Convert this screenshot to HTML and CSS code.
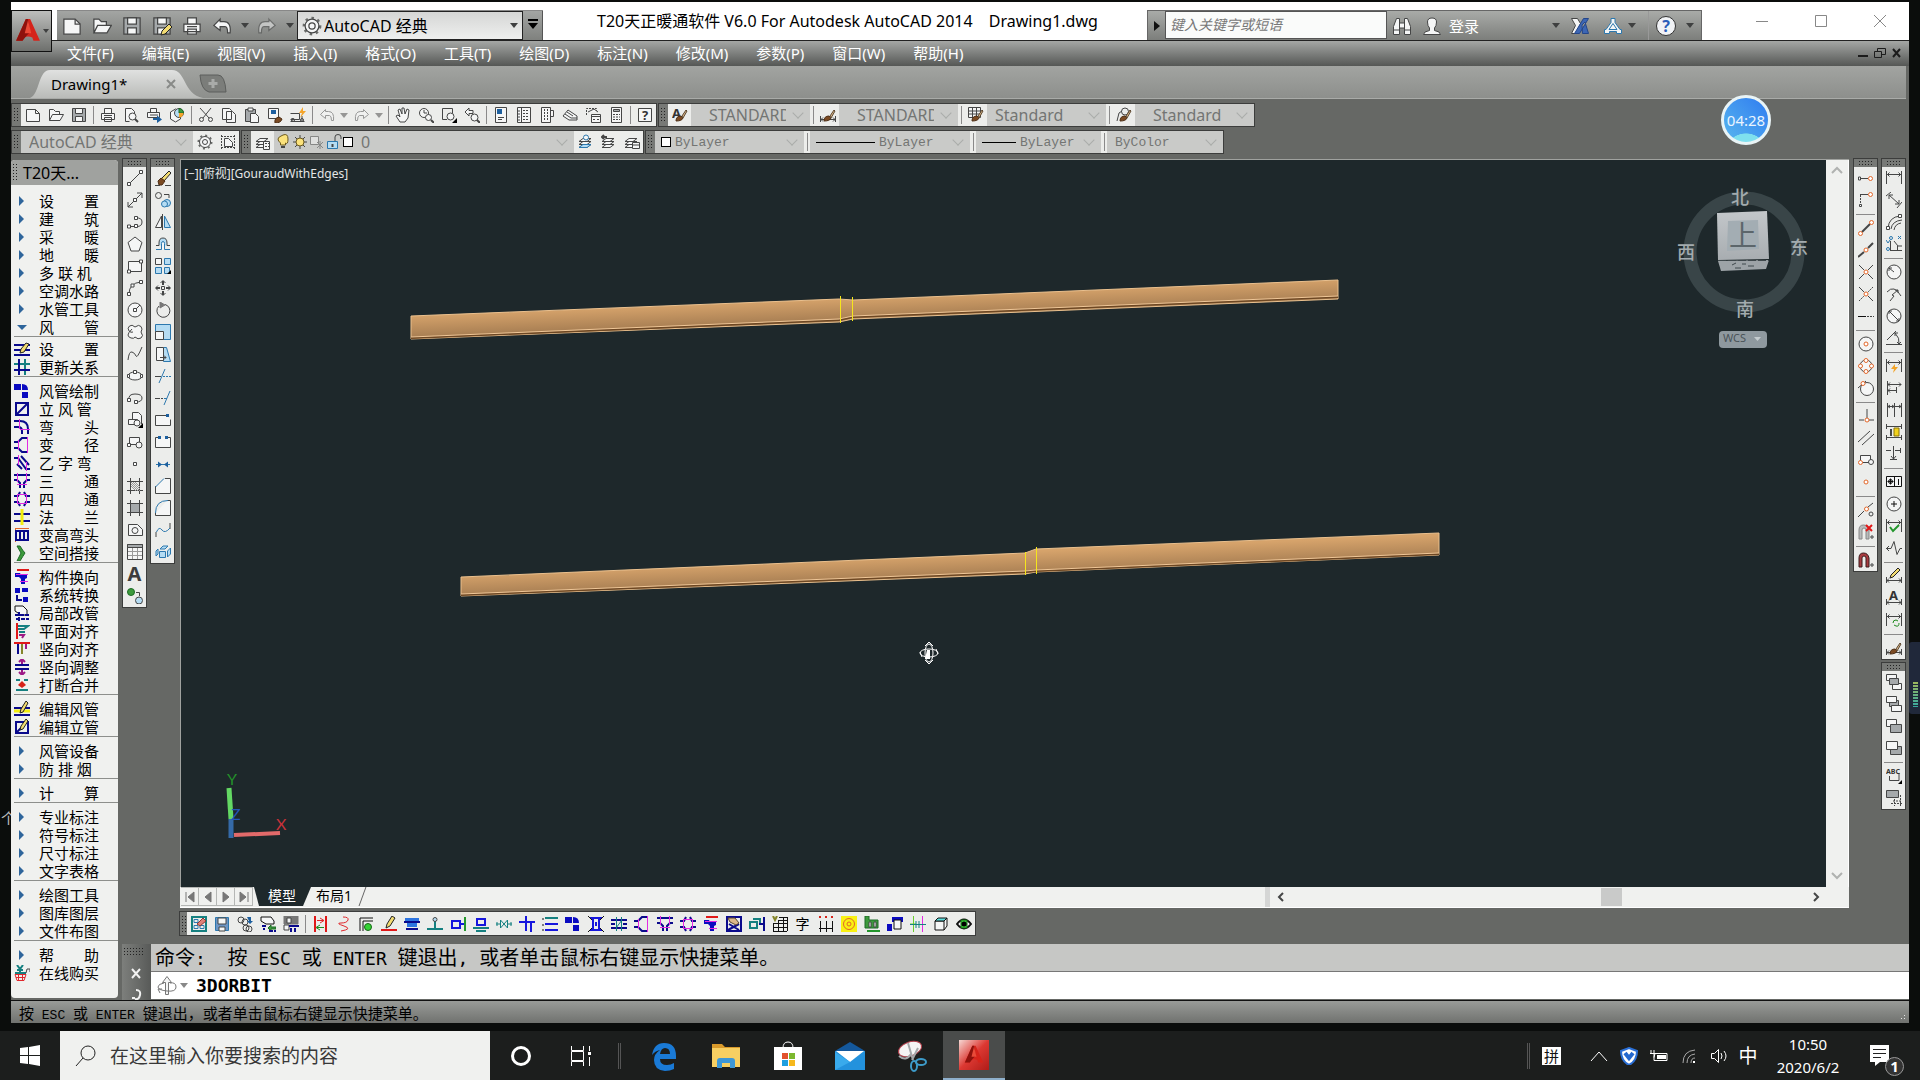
FILE: index.html
```html
<!DOCTYPE html>
<html lang="zh-CN">
<head>
    <meta charset="UTF-8">
    <meta name="viewport" content="width=device-width, initial-scale=1.0">
    <title>T20天正暖通软件 V6.0 For Autodesk AutoCAD 2014</title>
    <link rel="stylesheet" href="styles.css">
</head>
<body>
    <!-- shared icons -->
    <svg class="sprite" aria-hidden="true">
        <symbol id="new" viewBox="0 0 16 16"><path class="paper" d="M1.5 2.5h9l4 4v8h-13z"/><path d="M10.500 2.500v4h4"/></symbol>
        <symbol id="open" viewBox="0 0 16 16"><path class="paper" d="M1.500 13.500v-11h4l2 2h4v3M1.500 13.500l3-6h11l-3.500 6z"/></symbol>
        <symbol id="save" viewBox="0 0 16 16"><path class="steel" d="M1.500 1.500h13v13h-13z"/><path class="paper" d="M4.500 1.500h7v5h-7zM4.500 9.500h7v5h-7z"/></symbol>
        <symbol id="print" viewBox="0 0 16 16"><path class="paper" d="M4.500 6V1.500h7V6M1.500 6.500h13v6h-13zM4.500 10.500h7v4h-7z"/><path d="M4 8.500h8"/></symbol>
        <symbol id="undo" viewBox="0 0 16 16"><path class="paper" d="M6.500 2.500l-5 5 5 4v-3h4q2 0 2 5h2q1-9-5-9h-3z"/></symbol>
        <symbol id="redo" viewBox="0 0 16 16"><path class="paper" d="M9.500 2.500l5 5-5 4v-3h-4q-2 0-2 5h-2q-1-9 5-9h3z"/></symbol>
        <symbol id="gear" viewBox="0 0 16 16"><circle class="teeth" cx="8" cy="8" r="6.500"/><circle class="paper" cx="8" cy="8" r="5.500"/><circle cx="8" cy="8" r="2.500"/></symbol>
        <symbol id="brush" viewBox="0 0 16 16"><path class="brown" d="M4 14q0-5 5-5l2 2q-1 3-7 3z"/><path class="tan" d="M10 9l4-6 1 1-4 7z"/></symbol>
        <symbol id="dim" viewBox="0 0 16 16"><path d="M.5 1v13M15.500 1v13M1 4.500h14M3.500 2.500l-2 2 2 2M12.500 2.500l2 2-2 2"/></symbol>
        <symbol id="dimlow" viewBox="0 0 16 16"><path d="M.5 9v6M15.500 9v6M1 12.500h14M3 10.500l-2 2 2 2M13 10.500l2 2-2 2"/></symbol>
        <symbol id="sheets" viewBox="0 0 16 16"><path class="paper" d="M1 13.500h8l4-3H5zM1 10.500h8l4-3H5zM1 7.500h8l4-3H5z"/></symbol>
        <symbol id="duct" viewBox="0 0 16 16"><path class="f-navy" d="M0 1h7v6H0zM8 1q6 0 6 6H8zM8 9h6v6H8z"/></symbol>
        <symbol id="elbow" viewBox="0 0 16 16"><path class="navy" d="M0 2h6q8 0 8 8v5M0 8h4q4 0 4 4v3"/><path class="mag" d="M5.500 0v10M6 10.500h10"/></symbol>
        <symbol id="reducer" viewBox="0 0 16 16"><path class="navy" d="M0 5h4l4-4h5M0 11h4l4 4h5"/><path class="mag" d="M4.500 3v10M13.500 0v16"/></symbol>
        <symbol id="tee" viewBox="0 0 16 16"><path class="navy" d="M0 2h16M0 7h3l3 3v5M16 7h-3l-3 3v5"/><path class="mag" d="M3.500 0v9M12.500 0v9M3 11.500h10"/></symbol>
        <symbol id="cross" viewBox="0 0 16 16"><path class="navy" d="M0 5h4l2-4M0 11h4l2 4M16 5h-4l-2-4M16 11h-4l-2 4"/><path class="mag" d="M3.500 3v10M12.500 3v10M4 3.500h8M4 12.500h8"/></symbol>
        <symbol id="turn" viewBox="0 0 16 16"><path class="red2" d="M3 1h12"/><path class="f-navy" d="M1 4h5l1 2h6v3l-2 1v5H7v-5L5 8H1z"/><path class="mag" d="M2 5.500h12M6 12.500h8"/></symbol>
        <symbol id="acad" viewBox="0 0 24 24"><path class="f-red" d="M10 1h4l9 20h-6l-1-3q-4-2-8 0l-1 3H1z"/><path class="f-dred" d="M12 1l2 12-3 3-4 5H1L10 1z"/><path class="f-ored" d="M12 2l3 12h-6z"/></symbol>
    </svg>

    <span class="desk-label">个</span>

    <div class="window">
        <header class="titlebar">
            <button class="app-button" aria-label="应用程序菜单"><svg><use href="#acad"/></svg><i class="tri"></i></button>
            <div class="quick">
                <button aria-label="新建"><svg><use href="#new"/></svg></button>
                <button aria-label="打开"><svg><use href="#open"/></svg></button>
                <button aria-label="保存"><svg><use href="#save"/></svg></button>
                <button aria-label="另存为"><svg><use href="#save"/><path class="pencil" d="M9 19l1-4 7-7 3 3-7 7z"/></svg></button>
                <button aria-label="打印"><svg><use href="#print"/></svg></button>
                <button aria-label="放弃"><svg><use href="#undo"/></svg></button>
                <button class="slim" aria-label="放弃列表"><i class="tri"></i></button>
                <button class="faded" aria-label="重做"><svg><use href="#redo"/></svg></button>
                <button class="slim" aria-label="重做列表"><i class="tri"></i></button>
                <div class="space-pick">
                    <svg><use href="#gear"/></svg>
                    <select aria-label="工作空间"><option>AutoCAD 经典</option></select>
                    <i class="tri"></i>
                </div>
                <button class="quick-more" aria-label="自定义"><i class="tri"></i></button>
            </div>
            <h1>T20天正暖通软件 V6.0 For Autodesk AutoCAD 2014 <span>Drawing1.dwg</span></h1>
            <div class="info">
                <button class="info-open" aria-label="展开"><i class="tri right"></i></button>
                <input type="text" aria-label="搜索" placeholder="键入关键字或短语">
                <button aria-label="搜索"><svg><path class="paper" d="M1.500 18.500v-8l3-8h3v16zM12.500 18.500v-16h3l3 8v8zM7.500 7h5v5h-5zM1.500 14h6M12.500 14h6"/></svg></button>
                <button aria-label="用户"><svg><path class="paper" d="M1.500 18.500q0-3 6-4V12q-2-2-2-6t4.500-4T14.500 6t-2 6v2.500q6 1 6 4z"/></svg></button>
                <button class="login">登录<i class="tri"></i></button>
                <button aria-label="Exchange"><svg><path class="paper" d="M1.500 2.500h6l3 5-3 10h-6l4-8z"/><path class="f-exch" d="M18.500 2.500h-5l-9 15h5zM12 9l3-3 3.500 11.500h-6z"/></svg></button>
                <button class="net" aria-label="联机"><svg><path class="paper blue-line" d="M8 2.500h4v4l5 7h1.500v4h-5v-2h-7v2h-5v-4H3l5-7z"/><path class="blue-line" d="M10 7.500l4 6H6z"/></svg><i class="tri"></i></button>
                <button class="help" aria-label="帮助"><span>?</span><i class="tri"></i></button>
            </div>
            <div class="win-controls">
                <button aria-label="最小化"><svg><path d="M0 6.500h12"/></svg></button>
                <button aria-label="最大化"><svg><path d="M.5.5h11v11H.5z"/></svg></button>
                <button aria-label="关闭"><svg><path d="M0 0l12 12M12 0L0 12"/></svg></button>
            </div>
        </header>

        <nav class="menubar">
            <a href="#">文件(F)</a>
            <a href="#">编辑(E)</a>
            <a href="#">视图(V)</a>
            <a href="#">插入(I)</a>
            <a href="#">格式(O)</a>
            <a href="#">工具(T)</a>
            <a href="#">绘图(D)</a>
            <a href="#">标注(N)</a>
            <a href="#">修改(M)</a>
            <a href="#">参数(P)</a>
            <a href="#">窗口(W)</a>
            <a href="#">帮助(H)</a>
            <div class="doc-controls">
                <button aria-label="最小化"><svg><path class="thick" d="M1 9h10"/></svg></button>
                <button aria-label="还原"><svg><path d="M.5 4.500h7v6h-7zM3.500 4V1.500h8v6H8"/></svg></button>
                <button aria-label="关闭"><svg><path class="thick" d="M2 2l7 8M9 2l-7 8"/></svg></button>
            </div>
        </nav>

        <div class="filetabs">
            <div class="filetab"><a href="#">Drawing1*</a><button aria-label="关闭标签"><svg><path class="thick" d="M1 1l8 8M9 1L1 9"/></svg></button></div>
            <button class="newtab" aria-label="新图形"><svg><path d="M1 1h18q7 0 8 17H10Q2 16 1 1z"/><path class="plus" d="M14 5v9M9.500 9.500h9"/></svg></button>
        </div>

        <div class="dock">
            <div class="dock-row">
                <div class="bar">
                    <i class="grip"></i>
                    <button aria-label="新建"><svg><use href="#new"/></svg></button>
                    <button aria-label="打开"><svg><use href="#open"/></svg></button>
                    <button aria-label="保存"><svg><use href="#save"/></svg></button>
                    <i class="sep"></i>
                    <button aria-label="打印"><svg><use href="#print"/></svg></button>
                    <button aria-label="打印预览"><svg><path class="paper" d="M2.500 14.500v-13h6l3 3v3M2.500 14.500h4"/><circle class="paper" cx="9.500" cy="9.500" r="3.500"/><path class="thick" d="M12 12l3 3"/></svg></button>
                    <button aria-label="发布"><svg><path class="paper" d="M4.500 5V1.500h6V5M1.500 5.500h12v5h-12zM4 8h8"/><path class="f-blue" d="M7 11h4V8.500l5 4-5 3.500v-3H7z"/></svg></button>
                    <button aria-label="三维打印"><svg><path class="paper" d="M1.500 5l5-3 5 3v7l-5 3-5-3z"/><circle class="f-sky" cx="10" cy="6" r="4.500"/><path class="f-green" d="M10 1.500A4.500 4.500 0 0 1 14.500 6H10z"/><path class="f-orange" d="M14.500 6A4.500 4.500 0 0 1 10 10.500V6z"/></svg></button>
                    <i class="sep"></i>
                    <button aria-label="剪切"><svg><path d="M2 1l9 10M13 1L5 11"/><circle cx="3.500" cy="12.500" r="2"/><circle cx="12.500" cy="12.500" r="2"/></svg></button>
                    <button aria-label="复制"><svg><path class="paper" d="M1.500 1.500h7l2 2v9h-9zM5.500 4.500h6l3 3v8h-9z"/></svg></button>
                    <button aria-label="粘贴"><svg><path class="steel" d="M1.500 2.500h10v12h-10z"/><path class="paper" d="M4 1h5v3H4zM6.500 6.500h5l3 3v6h-8z"/></svg></button>
                    <button aria-label="特性匹配"><svg><path class="paper" d="M1.500 1.500h10v10h-10z"/><path class="f-blue" d="M4 3h5v4H4z"/><path class="brown" d="M8 16q-1-5 4-6l3 2q-1 4-7 4z"/></svg></button>
                    <button aria-label="块编辑器"><svg><path d="M.5 6.500h9v6h-9M2 11v4M12 9v6M.5 14.500h14"/><circle cx="3" cy="13" r="1.500"/><circle cx="12" cy="13" r="1.500"/><path class="f-orange" d="M13 0L9 6h3l-2 5 6-7h-3z"/></svg></button>
                    <i class="sep"></i>
                    <button class="faded" aria-label="放弃"><svg><use href="#undo"/></svg></button>
                    <button class="slim faded" aria-label="放弃列表"><i class="tri"></i></button>
                    <button class="faded" aria-label="重做"><svg><use href="#redo"/></svg></button>
                    <button class="slim faded" aria-label="重做列表"><i class="tri"></i></button>
                    <i class="sep"></i>
                    <button aria-label="平移"><svg><path class="paper" d="M5 15L1 9l2-1 2 2-2-7 2-1 2 5V1h2l1 6 2-5 2 1-1 8-3 4z"/></svg></button>
                    <button aria-label="缩放"><svg><circle class="paper" cx="6" cy="6" r="4.500"/><path d="M6 3v3h3"/><circle class="paper" cx="10.500" cy="10.500" r="3"/><path class="thick" d="M13 13l3 3"/></svg></button>
                    <button aria-label="窗口缩放"><svg><path d="M6 12.500H1.500v-11h10V6"/><circle class="paper" cx="9.500" cy="9.500" r="3.500"/><path class="f-black" d="M16 11v5h-5z"/></svg></button>
                    <button aria-label="缩放上一个"><svg><path class="paper" d="M5 1L1 5l4 4V6.500h4v-3H5z"/><circle class="paper" cx="10.500" cy="10.500" r="3.500"/><path class="thick" d="M13 13l3 3"/></svg></button>
                    <i class="sep"></i>
                    <button aria-label="特性"><svg><path class="paper" d="M2.500.5h11v15h-11z"/><path class="f-blue" d="M4 2h5v5H4z"/><path d="M5 10.500h6M5 12.500h4"/></svg></button>
                    <button aria-label="设计中心"><svg><path class="paper" d="M1.500.5h13v15h-13zM5.500 1v14"/><path class="dots" d="M7 3.500h6M7 6.500h6M7 9.500h6M7 12.500h6M3 3v11"/></svg></button>
                    <button aria-label="工具选项板"><svg><path class="paper" d="M2.500.5h9v15h-9zM11.500 3.500h3v6h-3"/><path class="dots" d="M5.500 2v12M8.500 2v12"/></svg></button>
                    <button aria-label="图纸集"><svg><path class="paper" d="M1 9l5-6 9 6v4H7z"/><path d="M3 7l6 4h6M5 5l6 4"/></svg></button>
                    <button aria-label="标记集"><svg><path class="dots" d="M1.500 8V1.500h10V6"/><path class="paper" d="M3 5l6-3 4 3M6.500 7.500h9v8h-9z"/><path d="M7 9.500h8M8 12.500h2M12 12.500h2"/></svg></button>
                    <button aria-label="计算器"><svg><path class="paper" d="M3.500.5h10v15h-10z"/><path class="steel" d="M5.500 2.500h6v2h-6z"/><path class="dots" d="M5 7.500h7M5 10h7M5 12.500h7"/></svg></button>
                    <i class="sep"></i>
                    <button aria-label="帮助"><svg><path class="paper" d="M1.500 1.500h13v13h-13z"/><text x="5" y="13">?</text></svg></button>
                </div>
                <div class="bar">
                    <i class="grip"></i>
                    <button aria-label="文字样式"><svg><text x="0" y="11">A</text><use href="#brush"/></svg></button>
                    <span class="combo style-w"><select class="indent" aria-label="文字样式" disabled><option>STANDARD</option></select></span>
                    <i class="sep"></i>
                    <button aria-label="标注样式"><svg><use href="#dimlow"/><use href="#brush"/></svg></button>
                    <span class="combo style-w"><select class="indent" aria-label="标注样式" disabled><option>STANDARD</option></select></span>
                    <i class="sep"></i>
                    <button aria-label="表格样式"><svg><path class="paper" d="M.5.5h12v10H.5zM.5 4h12M.5 7h12M4.500.5v10M8.500.5v10"/><use href="#brush"/></svg></button>
                    <span class="combo style-w"><select aria-label="表格样式" disabled><option>Standard</option></select></span>
                    <i class="sep"></i>
                    <button aria-label="引线样式"><svg><circle cx="9" cy="4.500" r="3.500"/><path d="M1 14l2-8 3-2"/><use href="#brush"/></svg></button>
                    <span class="combo style-w"><select class="indent" aria-label="引线样式" disabled><option>Standard</option></select></span>
                </div>
            </div>
            <div class="dock-row">
                <div class="bar">
                    <i class="grip"></i>
                    <span class="combo space-w"><select aria-label="工作空间" disabled><option>AutoCAD 经典</option></select></span>
                    <button aria-label="工作空间设置"><svg><use href="#gear"/></svg></button>
                    <button aria-label="我的工作空间"><svg><path class="dots" d="M1.500 1v14M14.500 1v14M1 2.500h14M1 13.500h14"/><path class="paper" d="M4.500 12.500v-8h4l4 4v4z"/></svg></button>
                </div>
                <div class="bar">
                    <i class="grip"></i>
                    <button aria-label="图层特性"><svg><use href="#sheets"/><path class="paper" d="M8.500 7.500h6v8h-6z"/><path class="dots" d="M10 9.500h4M10 12.500h4"/></svg></button>
                    <span class="combo layer-w">
                        <span class="layer-state">
                            <svg><path class="f-bulb" d="M5.500 11V9Q3 7 3 5t5-4 5 4-2.500 4v2z"/><path class="thick" d="M6 13h4"/></svg>
                            <svg><path d="M8 1v14M1 8h14M3 3l10 10M13 3L3 13"/><circle class="f-bulb" cx="8" cy="8" r="4"/></svg>
                            <svg class="faded"><path class="paper" d="M1.500 2.500h8v8h-8z"/><path d="M8 8l6 6M14 8l-6 6M11 7v8"/></svg>
                            <svg><path d="M9 7V3q0-2.500 3-2.500T15 3v2"/><path class="f-sky blue-line" d="M1.500 7.500h10v7h-10z"/><path class="thick" d="M6.500 10v3"/></svg>
                            <i class="swatch"></i>
                        </span>
                        <select aria-label="图层" disabled><option>0</option></select>
                    </span>
                    <button aria-label="置为当前"><svg><use href="#sheets"/><path class="f-sky blue-line" d="M1 13.500h8l4-3H5z"/><circle class="paper blue-line" cx="8" cy="3.500" r="2.500"/></svg></button>
                    <button aria-label="上一图层"><svg><use href="#sheets"/><path class="thick" d="M1 3h5M3 1L1 3l2 2"/></svg></button>
                    <button aria-label="图层状态"><svg><use href="#sheets"/><path class="paper" d="M8.500 8.500h7v6h-7zM8.500 11h7"/></svg></button>
                </div>
                <div class="bar props">
                    <i class="grip"></i>
                    <span class="combo color-w"><i class="swatch"></i><select aria-label="颜色" disabled><option>ByLayer</option></select></span>
                    <i class="sep"></i>
                    <span class="combo ltype-w"><i class="line long"></i><select aria-label="线型" disabled><option>ByLayer</option></select></span>
                    <i class="sep"></i>
                    <span class="combo lweight-w"><i class="line"></i><select aria-label="线宽" disabled><option>ByLayer</option></select></span>
                    <i class="sep"></i>
                    <span class="combo plot-w"><select aria-label="打印样式" disabled><option>ByColor</option></select></span>
                </div>
            </div>
        </div>

        <div class="workspace">
            <aside class="palette">
                <h2><i class="grip"></i>T20天...</h2>
                <ul class="folders first">
                    <li><a href="#"><b>设置</b></a></li>
                    <li><a href="#"><b>建筑</b></a></li>
                    <li><a href="#"><b>采暖</b></a></li>
                    <li><a href="#"><b>地暖</b></a></li>
                    <li><a href="#">多 联 机</a></li>
                    <li><a href="#">空调水路</a></li>
                    <li><a href="#">水管工具</a></li>
                    <li class="expanded"><a href="#"><b>风管</b></a></li>
                </ul>
                <ul>
                    <li><svg><path class="navy" d="M0 4h16M0 9h16M0 14h16"/><path class="pencil" d="M6 12l1-4 5-6 3 1-5 8z"/></svg><a href="#"><b>设置</b></a></li>
                    <li><svg><path class="teal" d="M0 5h16M11 0v16"/><path class="navy" d="M0 11h16M5 0v16"/></svg><a href="#">更新关系</a></li>
                </ul>
                <ul>
                    <li><svg><use href="#duct"/></svg><a href="#">风管绘制</a></li>
                    <li><svg><path class="navy" d="M2 2h12v12H2zM3 13L13 3"/></svg><a href="#">立 风 管</a></li>
                    <li><svg><use href="#elbow"/></svg><a href="#"><b>弯头</b></a></li>
                    <li><svg><use href="#reducer"/></svg><a href="#"><b>变径</b></a></li>
                    <li><svg><path class="navy" d="M0 3h4l8 11h4M3 9l5 5M7 1l8 9"/><path class="mag" d="M4.500 0v10M12.500 7v9"/></svg><a href="#">乙 字 弯</a></li>
                    <li><svg><use href="#tee"/></svg><a href="#"><b>三通</b></a></li>
                    <li><svg><use href="#cross"/></svg><a href="#"><b>四通</b></a></li>
                    <li><svg><path class="navy" d="M0 5h16M0 12h16"/><path class="yel" d="M8 0v16"/></svg><a href="#"><b>法兰</b></a></li>
                    <li><svg><path class="orange" d="M1.500 1v14M15 1.500H1"/><path class="navy" d="M2 4h12v9H2zM6 4v9M10 4v9"/></svg><a href="#">变高弯头</a></li>
                    <li><svg><path class="f-green" d="M3 1h3q3 5 5 7-2 3-5 8H3l4-8z"/></svg><a href="#">空间搭接</a></li>
                </ul>
                <ul>
                    <li><svg><use href="#turn"/></svg><a href="#">构件换向</a></li>
                    <li><svg><path class="f-navy" d="M1 1h5v5H1zM8 1h6v4H8zM9 10h5v5H9z"/><path class="navy" d="M3 8v5h5"/></svg><a href="#">系统转换</a></li>
                    <li><svg><path class="paper ink" d="M1 1h8l4 4v5H7L1 6z"/><path class="navy dash" d="M1 10h14M2 14h13M5 7v9"/></svg><a href="#">局部改管</a></li>
                    <li><svg><path class="red2" d="M3 0v16"/><path class="teal" d="M4 3h10l-4 3H4M5 9h6"/><path class="mag2" d="M5 12h5l-2 3"/></svg><a href="#">平面对齐</a></li>
                    <li><svg><path class="red2" d="M0 2h16"/><path class="navy" d="M4 3v10"/><path class="olive" d="M8 3v10"/><path class="mag2" d="M12 3v5"/></svg><a href="#">竖向对齐</a></li>
                    <li><svg><path class="navy" d="M1 6h14M1 10h14"/><path class="mag2" d="M8 0v5M5 3l3-3 3 3M8 11v5M5 13l3 3 3-3"/></svg><a href="#">竖向调整</a></li>
                    <li><svg><path class="teal" d="M2 3h4M10 3h4M2 13h12"/><path class="f-red" d="M8 4l4 4-4 3-4-3z"/></svg><a href="#">打断合并</a></li>
                </ul>
                <ul>
                    <li><svg><path class="navy" d="M0 7h16M0 14h16"/><path class="yel" d="M0 10h16"/><path class="pencil" d="M6 12l1-4 5-8 2 2-5 9z"/></svg><a href="#">编辑风管</a></li>
                    <li><svg><path class="navy" d="M2 3h12v11H2zM3 13L9 7"/><path class="pencil" d="M6 11l1-4 5-7 2 2-5 8z"/></svg><a href="#">编辑立管</a></li>
                </ul>
                <ul class="folders">
                    <li><a href="#">风管设备</a></li>
                    <li><a href="#">防 排 烟</a></li>
                </ul>
                <ul class="folders">
                    <li><a href="#"><b>计算</b></a></li>
                </ul>
                <ul class="folders">
                    <li><a href="#">专业标注</a></li>
                    <li><a href="#">符号标注</a></li>
                    <li><a href="#">尺寸标注</a></li>
                    <li><a href="#">文字表格</a></li>
                </ul>
                <ul class="folders">
                    <li><a href="#">绘图工具</a></li>
                    <li><a href="#">图库图层</a></li>
                    <li><a href="#">文件布图</a></li>
                </ul>
                <ul class="folders">
                    <li><a href="#"><b>帮助</b></a></li>
                    <li class="plain"><svg><path class="teal" d="M3 0l3 4 3-4M6 4v5M3 5h6M1 8h11"/><path class="red" d="M1 9.500h11l-2 6H3zM4.500 10v5M8.500 10v5M2 12.500h9"/><path d="M12 8l1-4h3v3"/></svg><a href="#">在线购买</a></li>
                </ul>
            </aside>

            <div class="main">
                <div class="stage">
                    <div class="bar column">
                        <i class="grip"></i>
                        <button aria-label="直线"><svg><path d="M2 14L14 2"/><path class="node" d="M.5 12.500h3v3h-3zM12.500.5h3v3h-3z"/></svg></button>
                        <button aria-label="构造线"><svg><path d="M1 15L15 1M1 10v5h5M10 1h5v5"/><path class="node" d="M6.500 6.500h3v3h-3z"/></svg></button>
                        <button aria-label="多段线"><svg><path d="M2 12.500h8q5 0 5-4.500T9 4"/><path class="node" d="M.5 11h3v3h-3zM7.500 10.500h3v3h-3zM7.500 2.500h3v3h-3z"/></svg></button>
                        <button aria-label="正多边形"><svg><path class="paper" d="M8 1l7 5.500-3 8.500H4L1 6.500z"/></svg></button>
                        <button aria-label="矩形"><svg><path class="paper" d="M1.500 3.500h13v10h-13z"/><path class="node" d="M.5 12h3v3h-3zM12.500 2h3v3h-3z"/></svg></button>
                        <button aria-label="圆弧"><svg><path d="M2 14Q2 3 14 2"/><path class="node" d="M.5 12.500h3v3h-3zM4 4h3v3H4zM12.500.5h3v3h-3z"/></svg></button>
                        <button aria-label="圆"><svg><circle class="paper" cx="8" cy="8" r="7"/><path d="M8 8l5-5"/><path class="node" d="M6.500 6.500h3v3h-3z"/></svg></button>
                        <button aria-label="修订云线"><svg><path class="paper" d="M5 5Q1 9 1 11t3 3 4-1q3 3 6 1t0-6q2-3 0-5.500T8 3Q5 0 2.500 2T2 7q2 2 4 1"/></svg></button>
                        <button aria-label="样条曲线"><svg><path d="M1 14Q2 5 5 6t4 4 6-9"/></svg></button>
                        <button aria-label="椭圆"><svg><ellipse class="paper" cx="8" cy="8" rx="7" ry="4"/><path class="node" d="M.5 6.500h2v3h-2zM13.500 6.500h2v3h-2zM6.500 2.500h3v3h-3z"/></svg></button>
                        <button aria-label="椭圆弧"><svg><path d="M2 10Q1 4 8 4t7 4-6 4"/><path class="node" d="M.5 8.500h3v3h-3zM7.500 10.500h3v3h-3z"/></svg></button>
                        <button aria-label="插入块"><svg><path class="paper" d="M5.500 7V.5h6l3 3V12M1.500 7.500h9v5h-9z"/><circle class="paper" cx="10" cy="11" r="3"/><path class="f-black" d="M16 11v5h-5z"/></svg></button>
                        <button aria-label="创建块"><svg><path class="paper" d="M2.500 3.500h10v7h-10z"/><circle class="paper" cx="12" cy="11" r="3"/><path class="node" d="M.5 9.500h3v3h-3z"/></svg></button>
                        <button aria-label="点"><svg><path class="node" d="M6.500 6.500h3v3h-3z"/></svg></button>
                        <button aria-label="图案填充"><svg><path d="M3.500 0v16M12.500 0v16M0 3.500h16M0 12.500h16"/><path class="hatch" d="M4 4l9 9M4 8l5 5M8 4l5 5M4 6l7 7M6 4l7 7"/></svg></button>
                        <button aria-label="渐变色"><svg><path class="steel" d="M3.500 3.500h9v9h-9z"/><path d="M3.500 0v16M12.500 0v16M0 3.500h16M0 12.500h16"/></svg></button>
                        <button aria-label="面域"><svg><path class="paper" d="M1.500 13.500v-11h9l5 5v6z"/><circle class="paper" cx="8" cy="8.500" r="3"/></svg></button>
                        <button aria-label="表格"><svg><path class="paper" d="M.5.5h15v15H.5z"/><path class="hatch" d="M1 7.500h14M1 11.500h14M5.500 3v12M10.500 3v12"/><path class="steel" d="M.5.5h15v3H.5z"/></svg></button>
                        <button class="big-a" aria-label="多行文字">A</button>
                        <button aria-label="添加选定对象"><svg><circle class="f-green" cx="4" cy="4" r="3.500"/><circle class="f-sky" cx="12" cy="12.500" r="3.500"/><path d="M9 4.500h3.500V8"/></svg></button>
                    </div>
                    <div class="bar column">
                        <i class="grip"></i>
                        <button aria-label="删除"><svg><path class="pencil" d="M6 9l8-8 2 2-7 8z"/><path class="brown" d="M3 11l3-3 4 3-3 4H4z"/><path d="M0 15.500h5M10 15.500h6"/></svg></button>
                        <button aria-label="复制"><svg><circle cx="3.500" cy="3.500" r="3"/><path d="M9 2.500h5V6"/><circle class="f-sky blue-line" cx="12" cy="11" r="3.500"/><circle class="f-sky blue-line" cx="9.500" cy="12" r="3"/></svg></button>
                        <button aria-label="镜像"><svg><path class="paper" d="M6.500 2v11.500h-6z"/><path class="f-sky blue-line" d="M9.500 2v11.500h6z"/><path d="M7.500 0v16"/></svg></button>
                        <button aria-label="偏移"><svg><path class="f-sky" d="M1 9.500h3V7q0-5 4-5t4 5v2.500h3"/><path class="paper blue-line" d="M1 13.500h5.500v-6q0-2 1.500-2t1.500 2v6H15"/></svg></button>
                        <button aria-label="阵列"><svg><path class="paper" d="M.5.5h6v6h-6z"/><path class="f-sky blue-line" d="M9.500.5h6v6h-6zM.5 9.500h6v6h-6zM9.500 9.500h5v6h-5z"/><path class="f-black" d="M16 12v4h-4z"/></svg></button>
                        <button aria-label="移动"><svg><path class="thick" d="M8 1v4M8 11v4M1 8h4M11 8h4"/><path d="M5.500 3L8 .5 10.500 3M5.500 13L8 15.500l2.500-2.500M3 5.500L.5 8 3 10.500M13 5.500L15.500 8 13 10.500M6.500 6.500h3v3h-3z"/></svg></button>
                        <button aria-label="旋转"><svg><path d="M4 4A6.500 6.500 0 1 0 10 2.500"/><path class="f-grey" d="M5 0v6l5-3z"/></svg></button>
                        <button aria-label="缩放"><svg><path class="f-sky blue-line" d="M.5.5h15v15H.5z"/><path class="paper" d="M.5 7.500h8v8h-8z"/></svg></button>
                        <button aria-label="拉伸"><svg><path class="f-sky blue-line" d="M8.500 1.500h3l4 14h-7z"/><path class="paper" d="M1.500 1.500h7v13h-7z"/><path d="M5 11.500h6M9 9.500l2 2-2 2"/></svg></button>
                        <button aria-label="修剪"><svg><path class="blue-line" d="M4 15L10 1"/><path d="M0 8.500h6"/><path class="blue-line dots" d="M8 8.500h8"/></svg></button>
                        <button aria-label="延伸"><svg><path class="blue-line" d="M9 15l6-14"/><path d="M0 8.500h5M6 8.500h2"/><path class="blue-line" d="M9 8.500h3"/></svg></button>
                        <button aria-label="打断于点"><svg><path class="paper" d="M12 3.500H.5v10h15v-6"/><path class="f-blue" d="M11 2h3v3h-3z"/></svg></button>
                        <button aria-label="打断"><svg><path class="paper" d="M3 3.500H.5v10h15v-10H13"/><path class="f-blue" d="M3 2h3v3H3zM10 2h3v3h-3z"/></svg></button>
                        <button aria-label="合并"><svg><path class="blue-line" d="M1 8.500h14"/><path class="f-blue" d="M3 5.500l4 3-4 3zM13 5.500l-4 3 4 3z"/></svg></button>
                        <button aria-label="倒角"><svg><path class="paper" d="M.5 8v7.500h15V.5H10"/><path class="blue-line" d="M.5 9L9 .5"/></svg></button>
                        <button aria-label="圆角"><svg><path class="paper" d="M.5 13v2.500h15V.5H12"/><path class="blue-line" d="M.5 13Q.5.500 13 .5"/></svg></button>
                        <button aria-label="光顺曲线"><svg><path d="M1 15v-5M15 1v6"/><path class="blue-line" d="M1.500 10Q4 4 7 8t8-2"/></svg></button>
                        <button aria-label="分解"><svg><path class="f-sky blue-line" d="M4.500 7.500h6v6h-6zM5 5l3-3h5l-3 3zM12.500 7l3-3v6l-3 3zM1 12V7l2-2v5z"/></svg></button>
                    </div>

                    <div class="doc">
                        <div class="view">
                            <div class="canvas">
                                <svg class="drawing" viewBox="181 160 1645 727" preserveAspectRatio="xMidYMid meet">
                                    <defs>
                                        <linearGradient id="wood-a" gradientUnits="userSpaceOnUse" x1="411" y1="315" x2="412" y2="340">
                                            <stop offset="0" stop-color="#d6a36b"/><stop offset="1" stop-color="#a27a50"/>
                                        </linearGradient>
                                        <linearGradient id="wood-b" gradientUnits="userSpaceOnUse" x1="462" y1="574" x2="463" y2="599">
                                            <stop offset="0" stop-color="#d6a36b"/><stop offset="1" stop-color="#a27a50"/>
                                        </linearGradient>
                                        <linearGradient id="face" x1="0" y1="0" x2="0" y2="1">
                                            <stop offset="0" stop-color="#c3c7ca"/><stop offset="1" stop-color="#a8adb1"/>
                                        </linearGradient>
                                    </defs>
                                    <!-- upper duct -->
                                    <path class="duct upper" d="M411 316L839 299L853 300L1338 280V299L853 319L839 322L411 339z"/>
                                    <path class="duct-shade" d="M411 338L839 320L853 317L1338 297"/>
                                    <path class="duct-edge" d="M411 337L839 319L853 316L1338 296"/>
                                    <path class="flange" d="M840.500 296v27M852.500 297v24"/>
                                    <!-- lower duct -->
                                    <path class="duct lower" d="M461 577L1025 553L1036 549L1439 533V555L1036 572L1025 574L461 596z"/>
                                    <path class="duct-shade" d="M461 595L1025 572L1036 571L1439 554"/>
                                    <path class="duct-edge" d="M461 594L1025 571L1036 570L1439 553"/>
                                    <path class="flange" d="M1025.500 552v23M1036.500 547v27"/>
                                    <!-- UCS icon -->
                                    <path class="axis-y" d="M229 788l2 31"/>
                                    <path class="axis-z" d="M231 819v19"/>
                                    <path class="axis-x" d="M234 835l46-2"/>
                                    <text class="name-y" x="227" y="785">Y</text>
                                    <text class="name-z" x="231" y="820">Z</text>
                                    <text class="name-x" x="276" y="830">X</text>
                                    <!-- orbit cursor -->
                                    <g class="orbit">
                                        <ellipse cx="929" cy="653" rx="9" ry="4"/><ellipse cx="929" cy="653" rx="4" ry="9"/>
                                        <path d="M925 646l4-4 4 4M925 660l4 4 4-4M922 657l-2-5M936 649l2 5"/>
                                        <path class="f-white" d="M925 659h5v-9h-3z"/>
                                    </g>
                                    <!-- view cube -->
                                    <circle class="compass" cx="1744" cy="252" r="54"/>
                                    <path class="cube" d="M1717 213L1767 211L1769 259L1718 260z"/>
                                    <path class="cube-side" d="M1718 261L1769 260L1766 269L1721 271z"/>
                                    <path class="cube-in" d="M1728 221L1758 220L1759 249L1727 251z"/>
                                    <path class="cube-edge" d="M1718 260.500h51M1732 265l4-2M1735 268h6M1742 264h4M1748 266h6"/>
                                    <text class="cube-top" x="1729" y="246">上</text>
                                    <g class="points">
                                        <text x="1731" y="204">北</text><text x="1736" y="316">南</text>
                                        <text x="1677" y="259">西</text><text x="1790" y="254">东</text>
                                    </g>
                                    <rect class="wcs" x="1719" y="331" width="48" height="17" rx="4"/>
                                    <text class="wcs-name" x="1723" y="342">WCS</text>
                                    <path class="wcs-tri" d="M1754 337h7l-3.500 4z"/>
                                </svg>
                                <p class="view-label">[−][俯视][GouraudWithEdges]</p>
                            </div>
                            <div class="vscroll">
                                <button aria-label="向上"><svg><path d="M1 8l5-5 5 5"/></svg></button>
                                <button aria-label="向下"><svg><path d="M1 3l5 5 5-5"/></svg></button>
                            </div>
                        </div>
                        <div class="layouts">
                            <button class="nav" aria-label="第一个"><svg><path class="f-grey" d="M2 1v10M10 1L4 6l6 5z"/></svg></button>
                            <button class="nav" aria-label="上一个"><svg><path class="f-grey" d="M9 1L3 6l6 5z"/></svg></button>
                            <button class="nav" aria-label="下一个"><svg><path class="f-grey" d="M3 1l6 5-6 5z"/></svg></button>
                            <button class="nav" aria-label="最后一个"><svg><path class="f-grey" d="M10 1v10M2 1l6 5-6 5z"/></svg></button>
                            <a class="layout current" href="#">模型</a>
                            <a class="layout" href="#">布局1</a>
                            <div class="hscroll">
                                <button aria-label="向左"><svg><path class="thick" d="M8 2L4 6l4 4"/></svg></button>
                                <i class="thumb"></i>
                                <button aria-label="向右"><svg><path class="thick" d="M4 2l4 4-4 4"/></svg></button>
                            </div>
                        </div>
                        <div class="bar tz">
                            <i class="grip"></i>
                            <button aria-label="设置"><svg><path class="teal" d="M1 1h14v14H1z"/><path class="blue-line" d="M3 3.500h4v3H3zM3 9.500h4v3H3zM9 9.500h4v3H9z"/><path class="f-coral" d="M6 8l6-6 3 3-6 5z"/></svg></button>
                            <button aria-label="保存"><svg><path class="f-steel blue-line" d="M1.500 1.500h13v13h-13z"/><path class="paper" d="M4 2h8v6H4zM5 11h6v4H5z"/></svg></button>
                            <button aria-label="转换"><svg><circle cx="4" cy="4" r="3"/><circle cx="8" cy="6" r="3"/><circle cx="9" cy="12" r="3"/><circle cx="12" cy="13" r="3"/><path class="f-blue" d="M10 1h4v4h2l-3 3-3-3h2z"/></svg></button>
                            <button aria-label="查询"><svg><path class="paper ink" d="M1 1h10l3 4v3H6L1 5z"/><path class="f-green" d="M8 12l3-3v2h5v2h-5v2z"/><path class="navy dash" d="M2 10h4M3 13h2M9 15h7"/></svg></button>
                            <button aria-label="图块"><svg><path class="f-grey" d="M1 0h14v8H1z"/><path class="paper" d="M4 2h4v5H4zM1 9h5v5H1z"/><path class="navy" d="M6 10h10M8 12v4M12 12v4"/></svg></button>
                            <i class="sep"></i>
                            <button aria-label="移动"><svg><path class="red2" d="M3 0v16M14 0v16"/><path class="red" d="M5 4.500h7M8 2l4 2.500L8 7"/><path class="green" d="M5 11.500h7M8 9l-4 2.500L8 14"/></svg></button>
                            <button aria-label="软管"><svg><path class="red" d="M8 1q6 0 5 3T6 7t3 3-3 5"/></svg></button>
                            <button aria-label="管线"><svg><path class="ink" d="M2 15V2h13M5 15V5h10"/><circle class="f-lime" cx="10" cy="11" r="3.500"/></svg></button>
                            <button aria-label="绘制"><svg><path class="red2" d="M0 14h16"/><path class="pencil" d="M5 12l1-4 5-8 3 2-5 8z"/></svg></button>
                            <button aria-label="设备"><svg><path class="f-royal" d="M1 2h14v3H1zM3 7h10v4H3z"/><path class="navy" d="M0 6h16M2 13h12"/></svg></button>
                            <button aria-label="风口"><svg><path class="teal" d="M0 13h16M8 5v7"/><circle class="f-sky" cx="8" cy="3.500" r="2"/></svg></button>
                            <button aria-label="阀门"><svg><path class="blue2" d="M2 5h8v7H2zM10 8h4"/><path class="green2" d="M15 1v14"/></svg></button>
                            <button aria-label="风机"><svg><path class="blue2" d="M4 3h8v6H4z"/><path class="teal" d="M0 12h16M3 15h10"/></svg></button>
                            <button aria-label="蝶阀"><svg><path class="teal-thin" d="M0 8h4M12 8h4M4.500 4v8l7-8v8zM1 6v4M15 6v4"/></svg></button>
                            <button aria-label="三通"><svg><path class="blue2" d="M0 6h16M7 0v15M12 6v10"/></svg></button>
                            <button aria-label="排列"><svg><path class="teal" d="M3 2h13"/><path class="blue2" d="M3 8h13M3 14h13"/><path class="ink" d="M0 3h2M0 9h2M0 14h2"/></svg></button>
                            <button aria-label="风管"><svg><use href="#duct"/></svg></button>
                            <button aria-label="静压箱"><svg><path class="blue2" d="M2 2h12M2 14h12M5 2v12M11 2v12M8 6v4"/><path class="ink" d="M0 0l4 4M16 0l-4 4M0 16l4-4M16 16l-4-4"/></svg></button>
                            <button aria-label="交叉"><svg><path class="navy" d="M0 4h16M0 12h16M0 8h4M12 8h4"/><path class="teal-thin" d="M5.500 1v14M10.500 1v14M5 12l6-8"/></svg></button>
                            <button aria-label="变径"><svg><use href="#reducer"/></svg></button>
                            <button aria-label="三通管"><svg><use href="#tee"/></svg></button>
                            <button aria-label="四通管"><svg><use href="#cross"/></svg></button>
                            <button aria-label="换向"><svg><use href="#turn"/></svg></button>
                            <button aria-label="改管"><svg><path class="navy" d="M1 1h14v14H1zM2 14l11-6M3 8l10 6"/><path class="tan" d="M2 2h7l4 5-3 2-6-3z"/></svg></button>
                            <button aria-label="剖面"><svg><path class="teal" d="M1 6h7v6H1zM4 3h7v6"/><path class="navy" d="M10 8h4M15 1v14"/></svg></button>
                            <button aria-label="材料表"><svg><path class="ink" d="M1 7.500h14M1 11.500h14M1 15.500h14M1.500 7v8M6.500 4v11M11.500 1v14M15.500 1v14M7 1.500h8M7 4.500h8"/><path class="olive" d="M1 0l2 4 2-4"/></svg></button>
                            <button class="zi" aria-label="文字">字</button>
                            <button aria-label="标注"><svg><path class="ink" d="M1 12.500h14M2.500 5v11M8.500 5v11M14.500 5v11"/><path class="f-red" d="M1 0h2v2H1zM7 0h2v2H7zM13 0h2v2h-2z"/></svg></button>
                            <button class="sun" aria-label="计算"><svg><circle class="orange" cx="8" cy="8" r="5.500"/><circle class="orange" cx="8" cy="8" r="2"/></svg></button>
                            <button aria-label="图库"><svg><path class="f-green" d="M1 0h4v4h9v8H1z"/><path class="paper" d="M5 6h2v5H5zM10 6h2v5h-2z"/><path class="green2" d="M3 15h13"/></svg></button>
                            <button aria-label="复制管"><svg><path class="f-navy" d="M5 1h11v5H5zM0 8h5v7H0z"/><path class="paper ink" d="M7 4h7v9H7z"/></svg></button>
                            <button aria-label="对齐"><svg><path class="lime" d="M3.500 0v16M6 8h-6"/><path class="mag" d="M12.500 0v16"/><path class="teal-thin" d="M0 8.500h16M6 5v7M9 5v7"/></svg></button>
                            <button aria-label="三维"><svg><path class="paper ink" d="M2 5h9v9H2zM11 14l3-4V2l-3 3"/><path class="f-cyan" d="M2 5l3-3h9l-3 3z"/></svg></button>
                            <button aria-label="观察"><svg><path class="paper ink thick" d="M1 8q7-9 14 0-7 9-14 0z"/><path class="f-lime" d="M5 4h6v8H5z"/><circle class="f-black" cx="8" cy="8" r="2.500"/></svg></button>
                        </div>
                    </div>

                    <div class="bar column snap">
                        <i class="grip"></i>
                        <button aria-label="临时追踪点"><svg><path d="M3 8.500h7"/><path class="node" d="M.5 7h2v3h-2z"/><circle class="orange" cx="12.500" cy="8.500" r="2"/></svg></button>
                        <button aria-label="捕捉自"><svg><path d="M2 2.500h8"/><path class="dots" d="M2.500 3v9"/><path class="node" d="M1.500 12.500h2v2h-2z"/><circle class="orange" cx="12.500" cy="2.500" r="2"/></svg></button>
                        <i class="sep"></i>
                        <button aria-label="端点"><svg><path class="thick" d="M4 12l8-8"/><circle class="orange" cx="2.500" cy="13.500" r="2"/><circle class="orange" cx="13.500" cy="2.500" r="2"/></svg></button>
                        <button aria-label="中点"><svg><path class="thick" d="M0 15l6-5M10 6l5-5"/><circle class="orange" cx="8" cy="8" r="2"/></svg></button>
                        <button aria-label="交点"><svg><path d="M1 1l5 5M15 15l-5-5M15 1l-5 5M1 15l5-5"/><circle class="orange" cx="8" cy="8" r="2"/></svg></button>
                        <button aria-label="外观交点"><svg><path d="M1 1l5 5M15 15l-5-5"/><path class="dots" d="M15 1l-5 5M1 15l5-5"/><circle class="orange" cx="8" cy="8" r="2"/></svg></button>
                        <button aria-label="延长线"><svg><path class="ink" d="M0 8.500h8"/><path class="dots" d="M9 8.500h7"/></svg></button>
                        <i class="sep"></i>
                        <button aria-label="圆心"><svg><circle class="paper" cx="8" cy="8" r="7"/><circle class="orange" cx="8" cy="8" r="2"/></svg></button>
                        <button aria-label="象限点"><svg><circle class="paper" cx="8" cy="8" r="6"/><circle class="orange" cx="8" cy="2.500" r="2"/><circle class="orange" cx="8" cy="13.500" r="2"/><circle class="orange" cx="2.500" cy="8" r="2"/><circle class="orange" cx="13.500" cy="8" r="2"/></svg></button>
                        <button aria-label="切点"><svg><circle class="paper" cx="9" cy="9" r="6.500"/><path d="M0 8l8-7"/><circle class="orange" cx="5" cy="3.500" r="2"/></svg></button>
                        <i class="sep"></i>
                        <button aria-label="垂足"><svg><path d="M9 1v9M1 12h5M11 12h5"/><circle class="orange" cx="9" cy="12" r="2"/></svg></button>
                        <button aria-label="平行线"><svg><path d="M0 12L12 1M4 15L16 4"/></svg></button>
                        <button aria-label="插入点"><svg><path class="paper" d="M2.500 3.500h10v7h-10z"/><circle class="paper" cx="13" cy="10" r="2.500"/><circle class="orange" cx="2.500" cy="10.500" r="2"/></svg></button>
                        <button aria-label="节点"><svg><circle class="orange" cx="8" cy="8" r="2"/></svg></button>
                        <i class="sep"></i>
                        <button aria-label="最近点"><svg><path d="M0 15l6-6M10 5l5-4"/><circle class="orange" cx="8.500" cy="7" r="2"/><circle cx="13" cy="12" r="2"/></svg></button>
                        <button aria-label="无捕捉"><svg><path class="magnet-off" d="M1 15V6q0-5 4.500-5T11 6v9H8V6q0-2-2-2T4 6v9z"/><path class="red2" d="M8 1l6 6M14 1L8 7"/><path class="node" d="M13 12h2v2h-2z"/></svg></button>
                        <i class="sep"></i>
                        <button aria-label="捕捉设置"><svg><path class="magnet" d="M1 15V6q0-5 4.500-5T11 6v9H8V6q0-2-2-2T4 6v9z"/><path class="node" d="M13 12h2v2h-2z"/></svg></button>
                    </div>
                    <div class="rails">
                        <div class="bar column">
                            <i class="grip"></i>
                            <button aria-label="线性"><svg><use href="#dim"/></svg></button>
                            <button aria-label="对齐"><svg><path d="M0 4l5-4M11 16l5-6M3 3l10 9M3 7V3h4M9 12h4V8"/></svg></button>
                            <button aria-label="弧长"><svg><path d="M2 14Q3 3 14 2M5 15q1-8 11-9M8 16q1-6 7-7"/><path class="node" d="M.5 12.500h3v3h-3zM12.500.5h3v3h-3z"/></svg></button>
                            <button aria-label="坐标"><svg><path d="M4 14.500h12M4.500 5v9M8 5l4 5h4M11.500 10v4"/><circle class="blue-line" cx="5" cy="2" r="1.500"/><circle class="blue-line" cx="2" cy="13" r="1.500"/><path class="blue-line" d="M12 0l3 3M15 0l-3 3M0 4l2 3 2-3"/></svg></button>
                            <i class="sep"></i>
                            <button aria-label="半径"><svg><circle class="paper" cx="8" cy="8" r="7"/><path d="M8 8L3 4M3 7V4h3"/></svg></button>
                            <button aria-label="折弯"><svg><path d="M1 6q7-8 14 4M4 15l4-5-2-1 6-5M9 4h3v3"/></svg></button>
                            <button aria-label="直径"><svg><circle class="paper" cx="8" cy="8" r="7"/><path d="M3 3l10 10M3 6V3h3M10 13h3v-3"/></svg></button>
                            <button aria-label="角度"><svg><path d="M0 14.500h16M1 10l9-9M9 3q5 5 4 11M9 6V3h3M11 12l2 2 2-2"/></svg></button>
                            <i class="sep"></i>
                            <button aria-label="快速标注"><svg><use href="#dim"/><path class="f-orange" d="M9 6l-4 5h3l-1 4 5-6H9z"/></svg></button>
                            <button aria-label="基线"><svg><path d="M1.500 1v14M10.500 7v6M1 4.500h14M1 10.500h9M13 2.500l2 2-2 2M4 2.500l-2 2 2 2M4 8.500l-2 2 2 2"/></svg></button>
                            <button aria-label="连续"><svg><path d="M1.500 1v14M8.500 1v14M15.500 1v14M2 4.500h13M4 3L2 4.500 4 6M6 3l2 1.500L6 6M13 3l2 1.500L13 6"/></svg></button>
                            <button aria-label="标注间距"><svg><path d="M.5 0v5M15.500 0v5M.5 11v5M15.500 11v5M1 2.500h14M1 13.500h14"/><path class="f-yellow" d="M8 4h5v8H8z"/><path class="thick" d="M5 5v7"/></svg></button>
                            <button aria-label="标注打断"><svg><path d="M0 4.500h5M9 4.500h5M7.500 0v13M4 13.500h7M14.500 2v5M5 10l2.500 3 2.500-3"/></svg></button>
                            <i class="sep"></i>
                            <button aria-label="公差"><svg><path class="paper ink" d="M.5 2.500h15v10H.5zM8.500 2.500v10"/><path class="ink" d="M1.500 7.500h6M4.500 4.500v6M12.500 5v6"/><circle class="ink" cx="4.500" cy="7.500" r="2"/></svg></button>
                            <button aria-label="圆心标记"><svg><circle class="paper" cx="8" cy="8" r="7"/><path class="ink" d="M8 5v6M5 8h6"/></svg></button>
                            <button aria-label="检验"><svg><use href="#dim"/><path class="green2" d="M4 9l3 4 6-6"/></svg></button>
                            <button aria-label="折弯线性"><svg><path d="M0 8.500h5l3-7 3 13 3-6h2M3 6L.5 8.500 3 11"/></svg></button>
                            <i class="sep"></i>
                            <button aria-label="编辑标注"><svg><use href="#dimlow"/><path class="pencil" d="M4 10l1-3 7-7 2 2-7 7z"/></svg></button>
                            <button aria-label="编辑标注文字"><svg><use href="#dimlow"/><text x="3" y="10">A</text></svg></button>
                            <button aria-label="标注更新"><svg><use href="#dim"/><path class="green" d="M7 11q0-3 3-3l2 1M13 11q0 4-3 3l-2-1"/></svg></button>
                            <i class="sep"></i>
                            <button aria-label="标注样式"><svg><use href="#dimlow"/><use href="#brush"/></svg></button>
                        </div>
                        <div class="bar column">
                            <i class="grip"></i>
                            <button aria-label="前置"><svg><path class="paper" d="M.5.5h10v6H.5zM6.500 9.500h9v6h-9z"/><path class="steel" d="M3.500 4.500h9v6h-9z"/></svg></button>
                            <button aria-label="后置"><svg><path class="steel" d="M3.500 4.500h9v6h-9z"/><path class="paper" d="M.5.5h10v6H.5zM5.500 9.500h10v6h-10z"/></svg></button>
                            <button aria-label="置于对象之上"><svg><path class="paper" d="M.5 1.500h10v7H.5z"/><path class="steel" d="M4.500 6.500h11v8h-11z"/></svg></button>
                            <button aria-label="置于对象之下"><svg><path class="steel" d="M4.500 6.500h11v8h-11z"/><path class="paper" d="M.5 1.500h11v8H.5z"/></svg></button>
                            <i class="sep"></i>
                            <button aria-label="注释前置"><svg><path d="M3.500 8v4.500H13V5"/><text class="tiny" x="0" y="6">ABC</text><path class="f-black" d="M16 12v4h-4z"/></svg></button>
                            <button aria-label="填充后置"><svg><path class="steel" d="M.5.5h12v7H.5z"/><path class="dots" d="M5 13.500h11M7 11h9M8.500 9v7M14.500 5v11"/></svg></button>
                        </div>
                    </div>
                </div>

                <div class="command">
                    <div class="command-side">
                        <i class="grip"></i>
                        <button aria-label="关闭命令行"><svg><path class="thick" d="M1 1l8 9M9 1l-8 9"/></svg></button>
                        <button aria-label="自定义"><svg><path class="thick" d="M5 1q5 0 4 5t-5 4M1 9h3"/></svg></button>
                    </div>
                    <div class="command-body">
                        <p>命令<code>:&nbsp; </code>按<code> ESC </code>或<code> ENTER </code>键退出<code>, </code>或者单击鼠标右键显示快捷菜单。</p>
                        <label class="prompt">
                            <svg><path class="paper" d="M8.500 19.500v-12h-3l4.500-6 4.500 6h-3v12z"/><path d="M7 8Q1 9 1 12t9 4 9-4-6-4M3 18l-2-4h4"/></svg>
                            <i class="tri"></i>
                            <input type="text" aria-label="命令" value="3DORBIT">
                        </label>
                    </div>
                </div>
            </div>
        </div>

        <footer class="status">按<code> ESC </code>或<code> ENTER </code>键退出，或者单击鼠标右键显示快捷菜单。<i class="resize"></i></footer>
    </div>

    <div class="timer">04:28</div>
    <div class="meter"><i></i></div>

    <div class="taskbar">
        <button class="start" aria-label="开始"><svg><path d="M0 3l8-1v8H0zM9 2l11-2v10H9zM0 11h8v8l-8-1zM9 11h11v10L9 19z"/></svg></button>
        <label class="find">
            <svg><circle cx="13" cy="8" r="7"/><path d="M8 13l-7 8"/></svg>
            <input type="text" aria-label="搜索" placeholder="在这里输入你要搜索的内容">
        </label>
        <button class="task" aria-label="Cortana"><svg><circle class="ring" cx="16" cy="16" r="8.500"/></svg></button>
        <button class="task" aria-label="任务视图"><svg><path class="white" d="M4.500 6v4.500h12V6M4.500 11.500h12v9h-12zM4.500 26v-4.500h12V26M22.500 6v5M22.500 17v9"/><path class="f-white" d="M21 12h3v3h-3z"/></svg></button>
        <i class="divider"></i>
        <button class="task" aria-label="Edge"><svg><path class="f-edge" d="M4 15Q6 3 16 3q12 0 12 13v3H12q0 6 7 6 4 0 7-2v6q-4 2-9 2Q6 30 6 20q0-6 6-10-5 1-8 5zM12 14h10q0-6-5-6-4 0-5 6z"/></svg></button>
        <button class="task" aria-label="文件资源管理器"><svg><path class="f-gold" d="M2 4h10l3 3h15v3H2z"/><path class="f-folder" d="M2 8h28v19H2z"/><path class="f-shelf" d="M7 28v-7q0-3 3-3h12q3 0 3 3v7h-5v-5h-8v5z"/></svg></button>
        <button class="task" aria-label="应用商店"><svg><path class="white" d="M11 8q0-6 5-6t5 6"/><path class="f-white" d="M2 7h28v23H2z"/><path class="f-ms1" d="M10 13h6v6h-6z"/><path class="f-ms2" d="M17 13h6v6h-6z"/><path class="f-ms3" d="M10 20h6v6h-6z"/><path class="f-ms4" d="M17 20h6v6h-6z"/></svg></button>
        <button class="task" aria-label="邮件"><svg><path class="f-mail1" d="M1 11L16 2l15 9v5H1z"/><path class="f-mail2" d="M1 11v19h30V11z"/><path class="f-white" d="M2 11h28L16 22z"/><path class="f-mail3" d="M1 30V12l15 10z"/></svg></button>
        <button class="task" aria-label="截图工具"><svg><ellipse class="snip" cx="14" cy="9" rx="12" ry="7" transform="rotate(-20 14 9)"/><path class="snip-in" d="M3 16q7 6 12-2M12 3l5 17M22 8l-6 12"/><ellipse class="handle" cx="18" cy="26" rx="3" ry="5"/><ellipse class="handle" cx="25" cy="22" rx="5" ry="3"/></svg></button>
        <button class="task running" aria-label="AutoCAD"><svg><use href="#acad" x="5" y="4" width="20" height="22"/></svg></button>
        <div class="tray">
            <i class="divider"></i>
            <span class="pin">拼</span>
            <button aria-label="显示隐藏的图标"><svg><path d="M1 14l8-9 8 9"/></svg></button>
            <button aria-label="电脑管家"><svg><path class="shield" d="M9 1l8 3q0 10-8 14Q1 14 1 4z"/><path class="tick" d="M5 6l4 5 4-5"/></svg></button>
            <button aria-label="电源"><svg><path d="M4 6.500h13v7H4zM1 3v3M4 3v3M0 6.500h5l-1 4"/><path class="f-white" d="M7 8h9v4H7z"/></svg></button>
            <button class="wifi" aria-label="网络"><svg><path d="M3 16Q3 4 15 3M7 16q0-8 8-9M11 16q0-5 4-5"/><path class="f-white" d="M13 14h2v2h-2z"/></svg></button>
            <button aria-label="音量"><svg><path d="M1.500 6.500h3l4-4v13l-4-4h-3zM11 6q2 3 0 6M14 4q4 5 0 10"/></svg></button>
            <span class="ime">中</span>
            <time class="clock">10:50<br>2020/6/2</time>
            <button class="notice" aria-label="通知"><svg><path class="f-white" d="M1 1h19v17h-9l-5 4v-4H1z"/><path class="lines" d="M4 5.500h13M4 9.500h13M4 13.500h8"/></svg><b>1</b></button>
        </div>
    </div>
</body>
</html>
```

FILE: styles.css
```css
:root {
    --frame: #666865;
    --panel: #ecedeb;
    --field: #c9cac8;
    --line: #3c3d3c;
    --canvas: #1e282b;
    --ink: #454646;
    --ui: "Noto Sans", "Noto Sans CJK SC", sans-serif;
}

* {
    box-sizing: border-box;
}

body {
    margin: 0;
    padding-top: 2px;
    min-height: 100vh;
    display: flex;
    flex-direction: column;
    position: relative;
    overflow-x: hidden;
    background: #0b0d0c;
    font: 15px/18px var(--ui);
    color: #000;
}

button, input, select {
    margin: 0;
    padding: 0;
    border: 0;
    background: none;
    font: inherit;
    color: inherit;
    appearance: none;
    outline: none;
}

button {
    display: flex;
    align-items: center;
    justify-content: center;
    flex-shrink: 0;
}

a {
    color: inherit;
    text-decoration: none;
}

ul, p, h1, h2 {
    margin: 0;
    padding: 0;
    list-style: none;
    font-weight: 400;
}

svg {
    display: block;
    flex-shrink: 0;
    width: 16px;
    height: 16px;
    fill: none;
    stroke: var(--ink);
}

.sprite {
    position: absolute;
    width: 0;
    height: 0;
}

.window {
    flex: 1;
    margin: 0 11px 8px;
    display: flex;
    flex-direction: column;
    background: var(--frame);
}

/* icon paints */
.paper { fill: #f5f6f6; }
.steel { fill: #a5a9ab; }
.f-steel { fill: #6d95c4; }
.node { fill: #fff; }
.thick { stroke-width: 2; }
.hatch { stroke: #999; }
.dots { stroke-dasharray: 2 1; }
.dash { stroke-dasharray: 4 1; }
.teeth { stroke: #6a6c6a; stroke-width: 2; stroke-dasharray: 2 3; }
.brown { fill: #7b4a22; stroke: #4c2d14; }
.tan { fill: #dcb98a; stroke: #5a4630; }
.pencil { fill: #f3dc72; stroke: #222; }
.blue-line { stroke: #2c78ae; }
.blue2 { stroke: #1616dd; stroke-width: 2; }
.navy { stroke: #0a0a8c; stroke-width: 2; }
.teal { stroke: #158080; stroke-width: 2; }
.teal-thin { stroke: #158080; }
.red { stroke: #e0282c; }
.red2 { stroke: #e01818; stroke-width: 2; }
.green { stroke: #1f8a1f; }
.green2 { stroke: #23962c; stroke-width: 2; }
.lime { stroke: #6ad02c; }
.mag { stroke: #e22be2; }
.mag2 { stroke: #9d1a86; stroke-width: 2; }
.olive { stroke: #85852a; stroke-width: 2; }
.yel { stroke: #f3ee10; stroke-width: 3; }
.orange { stroke: #e2672a; }
.snap .orange { fill: #fff; }
.ink { stroke: #111; }
.magnet { fill: #a93b3f; stroke: #3b1d1d; }
.magnet-off { fill: #b9bbbb; stroke: #888; }
.f-black { fill: #000; stroke: none; }
.f-grey { fill: #777; stroke: #777; }
.f-navy { fill: #0a0ac0; stroke: none; }
.f-royal { fill: #2c74e0; stroke: none; }
.f-blue { fill: #1d5f9e; stroke: none; }
.f-sky { fill: #b5dcf3; }
.f-green { fill: #3c9a3c; stroke: #1d6b26; }
.f-lime { fill: #35d435; stroke: #176617; }
.f-cyan { fill: #5fdede; stroke: #111; }
.f-orange { fill: #f4a52a; stroke: none; }
.f-yellow { fill: #f2d21c; stroke: #8a7408; }
.f-bulb { fill: #fbe27c; stroke: #6c5a1f; }
.f-coral { fill: #e08078; stroke: #8b3a34; }
.f-red { fill: #d6231a; stroke: none; }
.f-dred { fill: #8e120d; stroke: none; }
.f-ored { fill: #ea4a38; stroke: none; }
.f-exch { fill: #3c66b4; stroke: #24468a; }
.f-white { fill: #fff; stroke: none; }
.faded { opacity: .5; }

.tri {
    width: 0;
    height: 0;
    border: 4px solid transparent;
    border-top: 5px solid #3f4040;
    border-bottom: 0;
}

.tri.right {
    border: 5px solid transparent;
    border-left: 6px solid #111;
    border-right: 0;
}

.grip {
    width: 9px;
    align-self: stretch;
    background: radial-gradient(circle, #222 1px, transparent 1px) 1px 3px / 3px 3px, #777976;
    background-clip: content-box, border-box;
    padding: 3px 1px;
}

/* title bar */
.titlebar {
    position: relative;
    height: 39px;
    display: flex;
    align-items: flex-end;
    padding-left: 46px;
    background: #fff;
    border-bottom: 1px solid #222;
}

.app-button {
    position: absolute;
    left: 0;
    top: 8px;
    width: 41px;
    height: 42px;
    gap: 2px;
    z-index: 2;
    border: 1px solid #111;
    background: linear-gradient(#bdbebc, #6e706d);
}

.app-button svg {
    width: 26px;
    height: 28px;
}

.app-button .tri {
    border-width: 4px 3px 0;
}

.quick {
    display: flex;
    width: 486px;
    height: 30px;
    background: linear-gradient(#a3a5a3, #7f817e);
    border-top: 1px solid #888;
}

.quick button {
    width: 30px;
}

.quick svg {
    width: 20px;
    height: 20px;
}

.quick .slim {
    width: 15px;
}

.space-pick {
    flex: 1;
    display: flex;
    align-items: center;
    padding: 0 4px;
    border: 1px solid #222;
    background: linear-gradient(#d5d6d5, #eeefee);
}

.space-pick select {
    flex: 1;
    min-width: 0;
    height: 26px;
    font-size: 16px;
    padding-left: 2px;
}

.quick .quick-more {
    width: 20px;
    border-right: 1px solid #555;
}

.quick-more .tri {
    position: relative;
    border-top-color: #000;
    border-width: 6px 5px 0;
}

.quick-more .tri::before {
    content: "";
    position: absolute;
    left: -5px;
    top: -10px;
    width: 10px;
    height: 2px;
    background: #000;
}

.titlebar h1 {
    align-self: center;
    margin-left: 54px;
    font-size: 16px;
    line-height: 20px;
    white-space: nowrap;
}

.titlebar h1 span {
    margin-left: 12px;
}

.info {
    display: flex;
    align-items: stretch;
    width: 555px;
    height: 30px;
    margin-left: auto;
    border: 1px solid #666;
    border-bottom: 0;
    background: linear-gradient(#a9aba8, #7c7e7b);
}

.info button {
    width: 30px;
}

.info svg {
    width: 20px;
    height: 20px;
}

.info .info-open {
    width: 17px;
}

.info input {
    flex: 1;
    min-width: 0;
    padding-left: 4px;
    margin-bottom: 1px;
    background: #fafbfa;
    border: 1px solid #555;
    font-size: 14px;
    font-style: italic;
}

.info input::placeholder {
    color: #777;
    opacity: 1;
}

.info .login {
    width: 118px;
    justify-content: space-between;
    padding: 0 5px 0 2px;
    color: #fff;
}

.info .net {
    width: 54px;
    gap: 5px;
    padding-right: 4px;
    border-right: 1px solid #999;
}

.info .help {
    width: 52px;
    gap: 10px;
}

.help span {
    width: 20px;
    height: 20px;
    border-radius: 50%;
    border: 1px solid #333;
    background: #f0f2f5;
    color: #2a5db8;
    font: 700 16px/18px var(--ui);
}

.win-controls {
    display: flex;
    align-self: stretch;
    margin-left: 30px;
}

.win-controls button {
    width: 59px;
}

.win-controls svg {
    width: 12px;
    height: 12px;
    stroke: #888;
}

/* menu bar */
.menubar {
    display: flex;
    align-items: center;
    gap: 28px;
    height: 25px;
    padding: 0 6px 2px 56px;
    background: linear-gradient(#a5a7a5, #555755);
    color: #fff;
}

.doc-controls {
    display: flex;
    gap: 5px;
    margin-left: auto;
}

.doc-controls svg {
    width: 12px;
    height: 12px;
    stroke: #1c1c1c;
}

/* drawing tabs */
.filetabs {
    display: flex;
    align-items: flex-end;
    height: 33px;
    margin-right: 3px;
    padding-left: 19px;
    background: linear-gradient(#a2a4a1, #8d8f8c);
    border-bottom: 1px solid #a9aba8;
}

.filetab {
    display: flex;
    align-items: center;
    justify-content: space-between;
    width: 173px;
    height: 28px;
    padding: 0 27px 0 21px;
    background: linear-gradient(#e0e1e0, #b9bbb8);
    clip-path: path("M0 28C10 24 8 0 20 0H142C156 0 153 24 173 28Z");
}

.filetab svg {
    width: 10px;
    height: 10px;
    stroke: #888a88;
}

.newtab {
    margin: 0 0 5px -4px;
}

.newtab svg {
    width: 28px;
    height: 19px;
    fill: #7b7d7a;
    stroke: #5c5e5c;
}

.newtab .plus {
    stroke: #a9aba9;
    stroke-width: 3;
}

/* docked toolbars */
.dock {
    display: flex;
    flex-direction: column;
    gap: 3px;
    padding: 4px 0;
}

.dock-row {
    display: flex;
    gap: 1px;
}

.bar {
    display: flex;
    height: 24px;
    border: 1px solid var(--line);
    background: var(--panel);
}

.bar button {
    width: 23px;
}

.bar .slim {
    width: 12px;
}

.bar text {
    font: 700 13px var(--ui);
    fill: #333;
    stroke: none;
}

.bar .tiny {
    font-size: 7px;
}

.sep {
    width: 6px;
    flex-shrink: 0;
    background: linear-gradient(#8a8a8a, #8a8a8a) center / 1px 18px no-repeat;
}

.combo {
    position: relative;
    display: flex;
    align-items: center;
    background: var(--field);
    color: #737573;
}

.combo select {
    flex: 1;
    min-width: 0;
    height: 22px;
    padding: 0 24px 0 8px;
    font-size: 16px;
    opacity: 1;
    color: #737573;
}

.combo .indent {
    padding-left: 18px;
}

.combo::after {
    content: "";
    position: absolute;
    right: 8px;
    top: 5px;
    width: 7px;
    height: 7px;
    border: solid #aaacaa;
    border-width: 0 1px 1px 0;
    transform: rotate(45deg);
}

.style-w { width: 119px; }
.space-w { width: 172px; }
.layer-w { width: 300px; }
.color-w { width: 149px; padding-left: 6px; }
.ltype-w { width: 160px; padding-left: 6px; }
.lweight-w { width: 125px; padding-left: 6px; }
.plot-w { width: 116px; }

.props select {
    font: 13px "Liberation Mono", monospace;
    padding-left: 4px;
}

.props .plot-w select {
    padding-left: 8px;
}

.layer-state {
    display: flex;
    align-items: center;
    gap: 1px;
    padding-left: 1px;
}

.swatch {
    width: 10px;
    height: 10px;
    border: 1px solid #000;
    background: #fff;
}

.line {
    width: 34px;
    height: 1px;
    background: #000;
}

.line.long {
    width: 59px;
}

/* vertical toolbars */
.column {
    flex-direction: column;
    width: 25px;
    height: auto;
    align-self: flex-start;
}

.column .grip {
    width: auto;
    height: 8px;
    padding: 1px 4px;
    background-position: 1px 1px, 0 0;
}

.column button {
    height: 22px;
}

.column .sep {
    width: auto;
    height: 6px;
    background-size: 19px 1px;
}

.bar .big-a {
    font: 700 20px/20px var(--ui);
    color: #3c3c3c;
}

.workspace {
    flex: 1;
    display: flex;
    gap: 4px;
}

/* Tangent palette */
.palette {
    width: 107px;
    flex-shrink: 0;
    margin: 2px 0;
    background: #f0f1ef;
    border-radius: 4px;
}

.palette h2 {
    display: flex;
    align-items: center;
    height: 25px;
    gap: 3px;
    font-size: 16px;
    background: #a0a29f;
    border-radius: 4px 4px 0 0;
}

.palette .grip {
    background-color: transparent;
}

.palette ul {
    margin-left: 3px;
    padding-top: 5px;
    border-top: 1px solid #8d8f8c;
}

.palette .first {
    padding-top: 6px;
    border-top-color: transparent;
}

.palette .first + ul {
    padding-top: 3px;
}

.palette li {
    display: flex;
    align-items: center;
    height: 18px;
    gap: 9px;
}

.palette b {
    display: block;
    width: 60px;
    font-weight: 400;
    text-align: justify;
    text-align-last: justify;
}

.folders li::before {
    content: "";
    width: 0;
    height: 0;
    margin: 0 6px 0 5px;
    border: 5px solid transparent;
    border-left-color: #2e659b;
    border-right: 0;
}

.folders .expanded::before {
    margin: 0 3px;
    border: 5px solid transparent;
    border-top-color: #2e659b;
    border-bottom: 0;
}

.folders .plain::before {
    display: none;
}

/* main area */
.main {
    flex: 1;
    min-width: 0;
    display: flex;
    flex-direction: column;
}

.stage {
    flex: 1;
    display: flex;
    gap: 3px;
    padding-right: 3px;
}

.doc {
    flex: 1;
    min-width: 0;
    display: flex;
    flex-direction: column;
    margin: 1px 1px 8px 2px;
}

.view {
    flex: 1;
    display: flex;
    border: solid #a0a29f;
    border-width: 1px 0 0 1px;
}

.canvas {
    position: relative;
    flex: 1;
    background: var(--canvas);
}

.drawing {
    position: absolute;
    inset: 0;
    width: 100%;
    height: 100%;
    stroke: none;
}

.view-label {
    position: relative;
    padding: 5px 3px;
    font-size: 12px;
    color: #e4e6e6;
}

.duct { stroke: #eac08e; }
.upper { fill: url(#wood-a); }
.lower { fill: url(#wood-b); }

.duct-shade {
    fill: none;
    stroke: #6d4723;
    stroke-width: 2;
}

.duct-edge {
    fill: none;
    stroke: #f0c798;
}

.flange { stroke: #f5e61c; }
.axis-x { stroke: #e26a6a; stroke-width: 4; }
.axis-y { stroke: #63d863; stroke-width: 5; }
.axis-z { stroke: #356aa8; stroke-width: 5; }
.name-x, .name-y, .name-z { font: 16px Lato, sans-serif; }
.name-x { fill: #c8323a; }
.name-y { fill: #23902a; }
.name-z { fill: #2455b8; }

.orbit {
    fill: none;
    stroke: #fff;
}

.compass {
    fill: none;
    stroke: #394548;
    stroke-width: 13;
}

.cube { fill: url(#face); }
.cube-side { fill: #9da3a7; }
.cube-in { fill: #a3adb3; }
.cube-edge { stroke: #3f484c; stroke-dasharray: 8 2; }
.cube-top { font: 28px var(--ui); fill: #5c666b; }
.points { font: 500 18px var(--ui); fill: #a3abae; }
.wcs { fill: #8f999f; }
.wcs-name { font: 11px var(--ui); fill: #4a5358; }
.wcs-tri { fill: #c5cccf; }

.vscroll {
    width: 23px;
    display: flex;
    flex-direction: column;
    justify-content: space-between;
    background: #f0f1ef;
    border-right: 1px solid #fff;
}

.vscroll button {
    height: 22px;
}

.vscroll svg, .layouts svg {
    width: 12px;
    height: 12px;
}

.vscroll svg {
    stroke: #b0b2b0;
    stroke-width: 2;
}

.layouts {
    display: flex;
    height: 21px;
    padding-left: 1px;
    background: #f0f1ef;
    border-bottom: 1px solid #fff;
}

.nav {
    width: 18px;
    height: 19px;
    border: 1px solid #b5b7b5;
    border-left: 0;
}

.layout {
    position: relative;
    height: 19px;
    padding: 0 14px 0 5px;
    font-size: 14px;
}

.layout::after {
    content: "";
    position: absolute;
    right: 3px;
    top: 0;
    height: 19px;
    border-right: 1px solid #666;
    transform: skewX(-20deg);
}

.layout.current {
    margin-left: 1px;
    padding: 0 15px 0 14px;
    background: var(--canvas);
    color: #fff;
    clip-path: polygon(0 0, 100% 0, calc(100% - 8px) 100%, 5px 100%);
}

.layout.current::after {
    display: none;
}

.hscroll {
    display: flex;
    align-items: center;
    width: 35%;
    margin-left: auto;
    padding-right: 22px;
    border-left: 5px solid #d5d6d5;
}

.hscroll button {
    width: 22px;
}

.thumb {
    width: 21px;
    height: 18px;
    margin-left: auto;
    margin-right: 183px;
    background: #c9cac9;
}

.tz {
    align-self: flex-start;
    margin: 3px 0 0 -1px;
    height: 25px;
}

.tz .grip {
    width: 7px;
}

.bar .zi {
    font-size: 14px;
}

.sun svg {
    background: #f9f112;
}

.rails {
    display: flex;
    flex-direction: column;
    gap: 2px;
}

/* command line */
.command {
    display: flex;
    height: 56px;
    overflow: hidden;
}

.command-side {
    display: flex;
    flex-direction: column;
    align-items: center;
    justify-content: space-between;
    gap: 4px;
    width: 29px;
    background: linear-gradient(90deg, #7d7f7c, #585a58);
}

.command-side .grip {
    width: 24px;
    height: 14px;
    background-color: transparent;
}

.command-side svg {
    width: 11px;
    height: 11px;
    stroke: #f2f2f2;
}

.command-body {
    flex: 1;
    display: flex;
    flex-direction: column;
}

.command-body p {
    height: 28px;
    padding-left: 4px;
    background: #c6c7c5;
    border-bottom: 1px solid #777;
    font: 20px/26px "Noto Sans CJK SC", sans-serif;
    white-space: pre;
}

.command-body code {
    font: 18px/24px "DejaVu Sans Mono", monospace;
}

.prompt {
    display: flex;
    align-items: center;
    height: 27px;
    gap: 3px;
    padding-left: 6px;
    background: #fff;
}

.prompt svg {
    width: 20px;
    height: 21px;
    stroke: #777;
}

.prompt .tri {
    border-top-color: #888;
}

.prompt input {
    flex: 1;
    padding-left: 5px;
    font: 700 18px "DejaVu Sans Mono", monospace;
}

.status {
    position: relative;
    height: 23px;
    padding-left: 8px;
    border-top: 1px solid #111;
    background: linear-gradient(#999b98, #70726f);
    font: 15px/24px "Noto Sans CJK SC", sans-serif;
    white-space: pre;
}

.status code {
    font: 13px/22px "Liberation Mono", monospace;
}

.resize {
    position: absolute;
    right: 2px;
    bottom: 2px;
    width: 10px;
    height: 10px;
    background: radial-gradient(circle, #e5e5e5 1px, transparent 1px) 0 0 / 3px 3px;
    clip-path: polygon(100% 0, 100% 100%, 0 100%);
}

/* overlays */
.timer {
    position: absolute;
    top: 95px;
    right: 149px;
    width: 50px;
    height: 50px;
    border: 3px solid #e9f4f6;
    border-radius: 50%;
    background: radial-gradient(circle at 50% 130%, #7fe0ee 35%, transparent 36%), linear-gradient(225deg, #2f7cf0, #58b6ee);
    color: #eaf5ff;
    line-height: 44px;
    text-align: center;
}

.meter {
    position: absolute;
    top: 642px;
    right: 0;
    width: 11px;
    height: 72px;
    padding: 40px 2px 7px 4px;
    border-radius: 3px 0 0 3px;
    background: #20283a;
}

.meter i {
    display: block;
    height: 25px;
    background: repeating-linear-gradient(transparent 0 2px, #20283a 2px 3px), linear-gradient(#9db75c, #35a9a0);
}

.desk-label {
    position: absolute;
    left: 1px;
    top: 809px;
    width: 10px;
    overflow: hidden;
    color: #bbb;
}

/* Windows taskbar */
.taskbar {
    display: flex;
    align-items: stretch;
    height: 49px;
    background: #1c1e1d;
    color: #fff;
}

.start {
    width: 60px;
}

.start svg {
    width: 20px;
    height: 21px;
    fill: #fff;
    stroke: none;
}

.find {
    display: flex;
    align-items: center;
    width: 430px;
    gap: 13px;
    padding-left: 15px;
    background: #f0f1ef;
    color: #333;
}

.find svg {
    width: 22px;
    height: 22px;
    stroke: #222;
}

.find input {
    flex: 1;
    min-width: 0;
    font-size: 19px;
}

.find input::placeholder {
    color: #383838;
    opacity: 1;
}

.task {
    width: 62px;
}

.task svg {
    width: 32px;
    height: 32px;
}

.running {
    background: #4a4c4b;
    border-bottom: 2px solid #8fb0cc;
}

.running svg {
    background: linear-gradient(135deg, #f6d7d3, #dc3832 50%, #b01c18);
    width: 30px;
    height: 30px;
}

.divider {
    align-self: center;
    width: 3px;
    height: 26px;
    margin: 0 12px 0 4px;
    border: solid #555;
    border-width: 0 1px;
}

.ring { stroke: #fff; stroke-width: 3; }
.white { stroke: #fff; }
.f-edge { fill: #1a7ad6; stroke: none; fill-rule: evenodd; }
.f-gold { fill: #d99a2b; stroke: none; }
.f-folder { fill: #f7cf62; stroke: none; }
.f-shelf { fill: #3d97d6; stroke: none; }
.f-ms1 { fill: #e2512d; stroke: none; }
.f-ms2 { fill: #7cb82f; stroke: none; }
.f-ms3 { fill: #1f9fe0; stroke: none; }
.f-ms4 { fill: #f6b81c; stroke: none; }
.f-mail1 { fill: #14589c; stroke: none; }
.f-mail2 { fill: #2392dd; stroke: none; }
.f-mail3 { fill: #39aaec; stroke: none; }
.snip { fill: #f5f5f5; stroke: #b3404c; }
.snip-in { stroke: #a4a8aa; stroke-width: 2; }
.handle { stroke: #3d9bc9; stroke-width: 2; }

.tray {
    display: flex;
    align-items: center;
    margin-left: auto;
    padding-right: 22px;
}

.tray button {
    width: 30px;
    height: 40px;
}

.tray svg {
    width: 18px;
    height: 18px;
    stroke: #fff;
}

.pin {
    width: 19px;
    margin-right: 23px;
    background: #fff;
    color: #111;
    text-align: center;
}

.tray .shield { fill: #fff; stroke: #2a6fd6; stroke-width: 2; }
.tray .tick { stroke: #2468cf; stroke-width: 4; }
.wifi svg { stroke: #aaa; }

.ime {
    width: 28px;
    font-size: 19px;
    text-align: center;
}

.clock {
    width: 92px;
    line-height: 23px;
    text-align: center;
}

.tray .notice {
    position: relative;
    width: 38px;
    margin-left: 6px;
}

.notice svg {
    width: 21px;
    height: 23px;
}

.notice .lines {
    stroke: #222;
}

.notice b {
    position: absolute;
    right: -6px;
    bottom: 0;
    width: 19px;
    height: 19px;
    border: 1px solid #999;
    border-radius: 50%;
    background: #333;
    line-height: 17px;
}
```
